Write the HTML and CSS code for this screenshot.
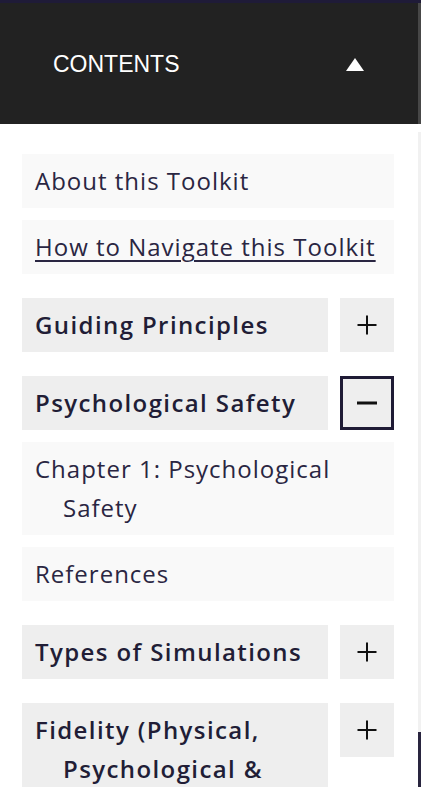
FILE: index.html
```html
<!DOCTYPE html>
<html lang="en">
<head>
<meta charset="utf-8">
<title>Contents</title>
<link rel="stylesheet" href="styles.css">
</head>
<body>
<div class="topline"></div>
<div class="frame">
  <main class="panel">
    <header class="toc-head">
      <span class="toc-title">CONTENTS</span>
      <span class="toc-caret"></span>
    </header>
    <nav class="toc">
      <div class="group">
        <a class="item">About this Toolkit</a>
        <a class="item link">How to Navigate this Toolkit</a>
      </div>
      <div class="group">
        <div class="row">
          <a class="item section">Guiding Principles</a>
          <button class="toggle"><span class="bar h"></span><span class="bar v"></span></button>
        </div>
      </div>
      <div class="group">
        <div class="row">
          <a class="item section">Psychological Safety</a>
          <button class="toggle open"><span class="bar h"></span></button>
        </div>
        <a class="item">Chapter 1: Psychological Safety</a>
        <a class="item">References</a>
      </div>
      <div class="group">
        <div class="row">
          <a class="item section">Types of Simulations</a>
          <button class="toggle"><span class="bar h"></span><span class="bar v"></span></button>
        </div>
      </div>
      <div class="group">
        <div class="row">
          <a class="item section">Fidelity (Physical, Psychological &amp; Conceptual)</a>
          <button class="toggle"><span class="bar h"></span><span class="bar v"></span></button>
        </div>
      </div>
    </nav>
  </main>
  <aside class="side">
    <div class="side-top"></div>
    <div class="side-gap"></div>
    <div class="side-track"></div>
    <div class="side-end"></div>
  </aside>
</div>
</body>
</html>
```

FILE: styles.css
```css
* { box-sizing: border-box; }
html, body { margin: 0; padding: 0; }
body {
  width: 421px;
  height: 787px;
  overflow: hidden;
  background: #ffffff;
  font-family: "Open Sans", "Noto Sans", sans-serif;
}
.topline { height: 3px; background: #1f1b38; }
.frame { display: flex; height: 784px; }
.panel { width: 418px; flex: none; }
.toc-head {
  height: 121px;
  background: #222222;
  display: flex;
  align-items: center;
  justify-content: space-between;
  padding: 0 54px 0 53px;
}
.toc-title {
  font-family: "Liberation Sans", Arial, sans-serif;
  font-size: 23px;
  color: #ffffff;
  line-height: 1;
  padding-top: 2px;
}
.toc-caret {
  width: 0; height: 0;
  border-left: 9px solid transparent;
  border-right: 9px solid transparent;
  border-bottom: 13px solid #ffffff;
  margin-top: 2px;
}
.toc {
  padding: 30px 24px 0 22px;
  display: flex;
  flex-direction: column;
  gap: 24px;
}
.group { display: flex; flex-direction: column; gap: 12px; }
.row { display: flex; gap: 12px; align-items: flex-start; }
.item {
  display: block;
  background: #f9f9f9;
  color: #2a2642;
  font-size: 24px;
  letter-spacing: 1px;
  line-height: 39px;
  padding: 7px 13px 8px 41px;
  text-indent: -28px;
}
.item.link {
  text-decoration: underline;
  text-decoration-thickness: 1.5px;
  text-underline-offset: 4px;
}
.item.section {
  flex: 1;
  background: #eeeeee;
  font-weight: 650;
  letter-spacing: 1.4px;
  color: #211d36;
}
.toggle {
  flex: none;
  width: 54px;
  height: 54px;
  border: 0;
  padding: 0;
  background: #eeeeee;
  position: relative;
  display: flex;
  align-items: center;
  justify-content: center;
}
.toggle.open { border: 3px solid #1f1b35; }
.bar { position: absolute; background: #111111; }
.bar.h { width: 19px; height: 2px; left: 50%; top: 50%; transform: translate(-50%, -50%); }
.bar.v { width: 2px; height: 19px; left: 50%; top: 50%; transform: translate(-50%, -50%); }
.toggle.open .bar.h { height: 3px; width: 20px; }
.side { width: 3px; flex: none; display: flex; flex-direction: column; }
.side-top { height: 121px; background: #474747; }
.side-gap { height: 8px; background: #ffffff; }
.side-track { height: 600px; background: #f1f1f1; }
.side-end { flex: 1; background: #29253f; }
```
